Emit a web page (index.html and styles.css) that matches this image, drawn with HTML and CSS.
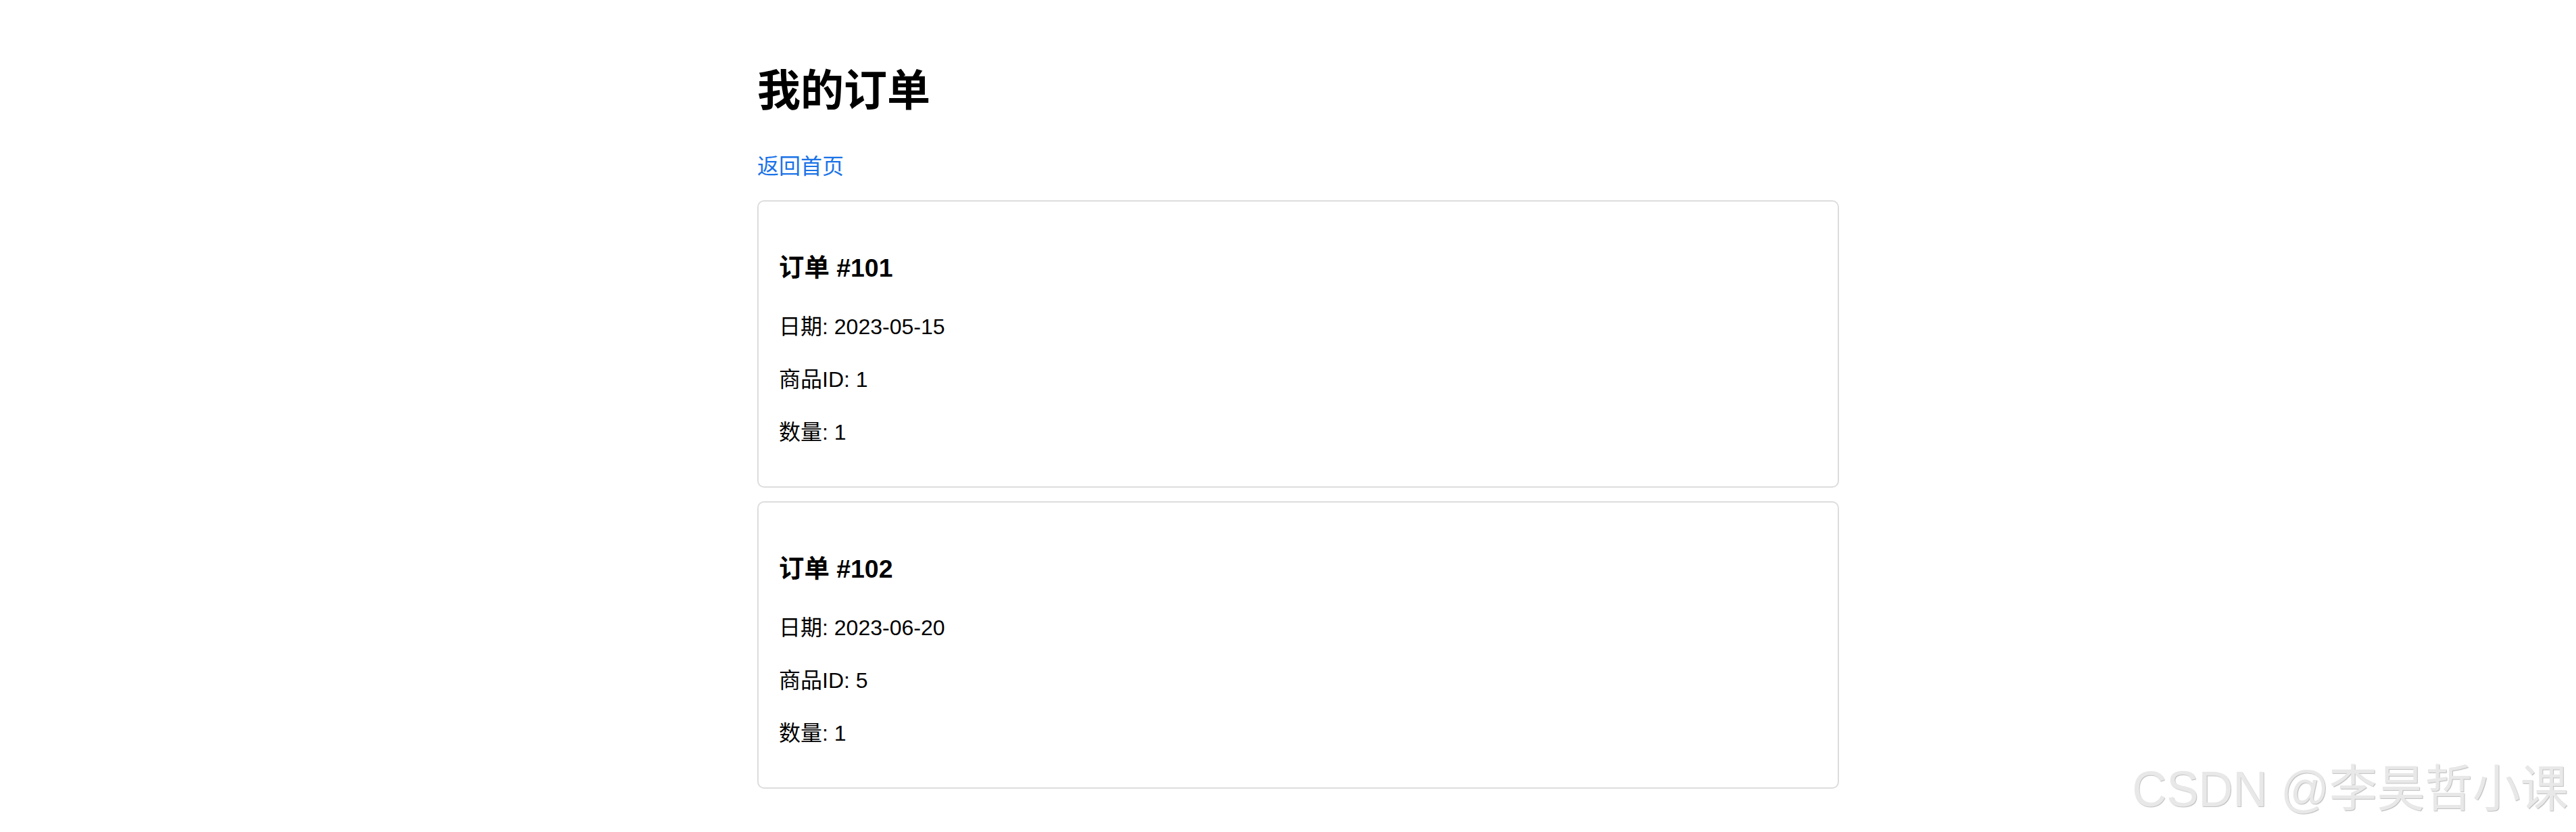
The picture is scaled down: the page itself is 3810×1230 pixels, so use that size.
FILE: index.html
```html
<!DOCTYPE html>
<html lang="zh-CN">
<head>
<meta charset="utf-8">
<title>我的订单</title>
<link rel="stylesheet" href="styles.css">
</head>
<body>
<div class="container">
  <h1 class="title">我的订单</h1>
  <p class="back"><a href="#" class="back-link">返回首页</a></p>
  <div class="order">
    <h3 class="order-title">订单 #101</h3>
    <p class="order-line">日期: 2023-05-15</p>
    <p class="order-line">商品ID: 1</p>
    <p class="order-line">数量: 1</p>
  </div>
  <div class="order">
    <h3 class="order-title">订单 #102</h3>
    <p class="order-line">日期: 2023-06-20</p>
    <p class="order-line">商品ID: 5</p>
    <p class="order-line">数量: 1</p>
  </div>
</div>
<div class="watermark">CSDN @李昊哲小课</div>
</body>
</html>
```

FILE: styles.css
```css
html, body {
  margin: 0;
  background: #ffffff;
  overflow: hidden;
}
body {
  padding: 0 0 0 30px;
  font-family: "Liberation Sans", Arial, "Noto Sans CJK SC", sans-serif;
  color: #000;
  font-size: 32px;
  height: 1230px;
  box-sizing: border-box;
}
.container {
  width: 1600px;
  margin: 0 auto;
  padding-top: 45px;
}
.title {
  font-size: 64px;
  line-height: 92px;
  margin: 42.88px 0;
  font-weight: bold;
}
.back {
  margin: 32px 0 27px;
  line-height: 46px;
}
.back-link {
  color: #1a73e8;
  text-decoration: none;
}
.order {
  border: 2px solid #dddddd;
  border-radius: 10px;
  padding: 35px 30px 25px;
  margin-bottom: 20px;
}
.order-title {
  font-size: 37.44px;
  line-height: 52px;
  margin: 37.44px 0;
  font-weight: bold;
}
.order-line {
  margin: 32px 0;
  line-height: 46px;
}
.watermark {
  position: fixed;
  right: 12px;
  bottom: 26px;
  font-family: "Liberation Sans", Arial, "Noto Sans CJK SC", sans-serif;
  font-size: 74px;
  line-height: 1;
  color: #e8e8e8;
  text-shadow: 1px 1px 1px #bdbdbd;
  transform: scaleX(0.955);
  transform-origin: right bottom;
  white-space: nowrap;
}
```
